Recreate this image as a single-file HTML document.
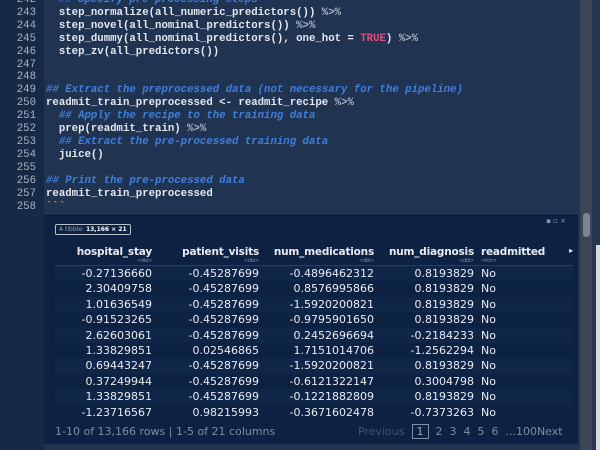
<!DOCTYPE html>
<html><head><style>
body{margin:0;width:600px;height:450px;overflow:hidden;background:#203452;position:relative;font-family:"Liberation Mono",monospace}
.gut{position:absolute;left:0;top:0;width:44px;height:450px;background:#172a45}
.code{position:absolute;left:0;top:-6px;font-size:10.7px;line-height:12.9px;color:#e3e8f0;white-space:pre;font-weight:bold}
.ln{display:inline-block;width:36px;text-align:right;color:#a9b3c4;font-weight:normal;margin-right:10px}
.c{color:#3f7fe0;font-style:italic}
.p{color:#aab6c8}
.t{color:#e0507c}
.o{color:#d9a040}
.sb{position:absolute;left:580px;top:0;width:12px;height:450px;background:#3a4556}
.th{position:absolute;left:583px;top:213px;width:7px;height:24px;background:#7b8492;border-radius:3px}
.rs{position:absolute;left:592px;top:0;width:8px;height:450px;background:#26364f}
.rs2{position:absolute;left:596px;top:245px;width:4px;height:205px;background:#d8d8d8}
.out{position:absolute;left:44px;top:213px;width:534px;height:230px;background:#0d2142;border-top:1px solid #2c4060;font-family:"DejaVu Sans",sans-serif}
.tag{position:absolute;left:11px;top:10px;border:1px solid #b8c0cc;border-radius:2px;font-size:6px;color:#9aa4b4;padding:1px 3px}
.tag b{color:#fff}
table{position:absolute;left:11px;top:30px;border-collapse:collapse;font-size:11px;color:#e8ecf2}
th{font-weight:bold;text-align:right;padding:0;padding-top:2px;height:19px;vertical-align:top;font-size:10.5px;position:relative;border-bottom:1px solid #2a3d5c;letter-spacing:-0.2px}
th small{position:absolute;right:0;top:14px;font-size:5px;color:#8090a8;font-weight:normal}
td{text-align:right;padding:0;height:15.4px;line-height:15.4px}
tr:nth-child(even) td{background:#102648}
.ic{position:absolute;right:12px;top:3px;font-size:7px;color:#8898b0}
.ft{position:absolute;left:11px;top:211px;font-size:11px;color:#7f8ea4}
.pg{position:absolute;left:314px;top:211px;font-size:11px;color:#7f8ea4;word-spacing:3.5px}
.pg .pv{color:#3f5272}
.pg .b{border:1px solid #7f8ea4;padding:0 4px;color:#9aa8bc}
</style></head><body>
<div class="gut"></div>
<div class="code"><span class="ln">242</span>  <span class="c">## Specify pre-processing steps</span>
<span class="ln">243</span>  step_normalize(all_numeric_predictors()) <span class="p">%&gt;%</span>
<span class="ln">244</span>  step_novel(all_nominal_predictors()) <span class="p">%&gt;%</span>
<span class="ln">245</span>  step_dummy(all_nominal_predictors(), one_hot = <span class="t">TRUE</span>) <span class="p">%&gt;%</span>
<span class="ln">246</span>  step_zv(all_predictors())
<span class="ln">247</span>
<span class="ln">248</span>
<span class="ln">249</span><span class="c">## Extract the preprocessed data (not necessary for the pipeline)</span>
<span class="ln">250</span>readmit_train_preprocessed &lt;- readmit_recipe <span class="p">%&gt;%</span>
<span class="ln">251</span>  <span class="c">## Apply the recipe to the training data</span>
<span class="ln">252</span>  prep(readmit_train) <span class="p">%&gt;%</span>
<span class="ln">253</span>  <span class="c">## Extract the pre-processed training data</span>
<span class="ln">254</span>  juice()
<span class="ln">255</span>
<span class="ln">256</span><span class="c">## Print the pre-processed data</span>
<span class="ln">257</span>readmit_train_preprocessed
<span class="ln">258</span><span class="o">&#96;&#96;&#96;</span></div>
<div class="sb"></div><div class="th"></div><div class="rs"></div><div class="rs2"></div>
<div class="out">
<div class="ic">▪ ▫ ×</div>
<div class="tag">A tibble: <b>13,166 × 21</b></div>
<table>
<tr><th style="width:97px">hospital_stay<small>&lt;dbl&gt;</small></th><th style="width:107px">patient_visits<small>&lt;dbl&gt;</small></th><th style="width:115px">num_medications<small>&lt;dbl&gt;</small></th><th style="width:100px">num_diagnosis<small>&lt;dbl&gt;</small></th><th style="width:72px;text-align:left;padding-left:7px">readmitted<small style="left:7px;right:auto">&lt;fctr&gt;</small></th><th style="width:20px;font-size:8px">▸</th></tr>
<tr><td>-0.27136660</td><td>-0.45287699</td><td>-0.4896462312</td><td>0.8193829</td><td style="text-align:left;padding-left:7px">No</td><td></td></tr>
<tr><td>2.30409758</td><td>-0.45287699</td><td>0.8576995866</td><td>0.8193829</td><td style="text-align:left;padding-left:7px">No</td><td></td></tr>
<tr><td>1.01636549</td><td>-0.45287699</td><td>-1.5920200821</td><td>0.8193829</td><td style="text-align:left;padding-left:7px">No</td><td></td></tr>
<tr><td>-0.91523265</td><td>-0.45287699</td><td>-0.9795901650</td><td>0.8193829</td><td style="text-align:left;padding-left:7px">No</td><td></td></tr>
<tr><td>2.62603061</td><td>-0.45287699</td><td>0.2452696694</td><td>-0.2184233</td><td style="text-align:left;padding-left:7px">No</td><td></td></tr>
<tr><td>1.33829851</td><td>0.02546865</td><td>1.7151014706</td><td>-1.2562294</td><td style="text-align:left;padding-left:7px">No</td><td></td></tr>
<tr><td>0.69443247</td><td>-0.45287699</td><td>-1.5920200821</td><td>0.8193829</td><td style="text-align:left;padding-left:7px">No</td><td></td></tr>
<tr><td>0.37249944</td><td>-0.45287699</td><td>-0.6121322147</td><td>0.3004798</td><td style="text-align:left;padding-left:7px">No</td><td></td></tr>
<tr><td>1.33829851</td><td>-0.45287699</td><td>-0.1221882809</td><td>0.8193829</td><td style="text-align:left;padding-left:7px">No</td><td></td></tr>
<tr><td>-1.23716567</td><td>0.98215993</td><td>-0.3671602478</td><td>-0.7373263</td><td style="text-align:left;padding-left:7px">No</td><td></td></tr>
</table>
<div class="ft">1-10 of 13,166 rows | 1-5 of 21 columns</div>
<div class="pg"><span class="pv">Previous</span> <span class="b">1</span> 2 3 4 5 6 ...100Next</div>
</div>
</body></html>
